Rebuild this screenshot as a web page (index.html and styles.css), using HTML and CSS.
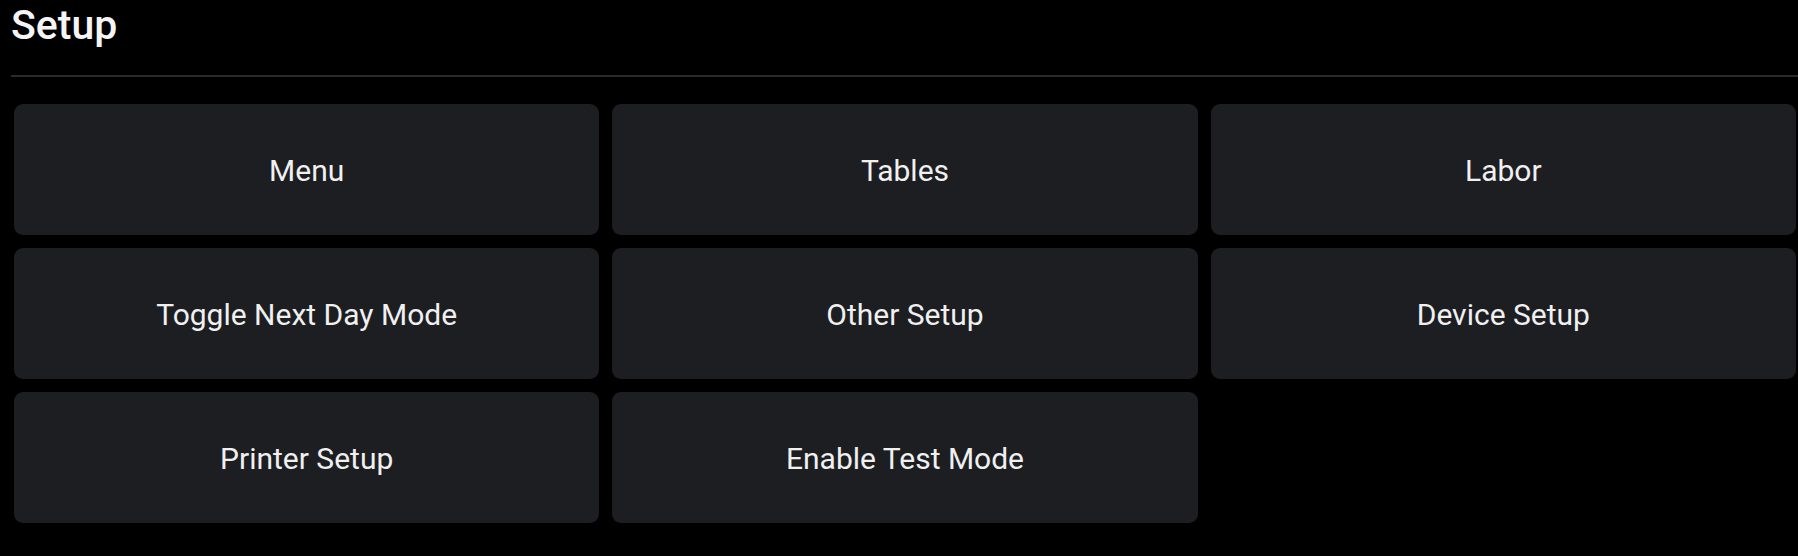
FILE: index.html
```html
<!DOCTYPE html>
<html lang="en">
<head>
    <meta charset="UTF-8">
    <meta name="viewport" content="width=device-width, initial-scale=1.0">
    <title>Setup</title>
    <link rel="stylesheet" href="styles.css">
</head>
<body>
    <div class="page">
        <h1 class="page-title">Setup</h1>
        <hr class="divider">

        <div class="setup-grid">
            <button class="setup-button">Menu</button>
            <button class="setup-button">Tables</button>
            <button class="setup-button">Labor</button>
            <button class="setup-button">Toggle Next Day Mode</button>
            <button class="setup-button">Other Setup</button>
            <button class="setup-button">Device Setup</button>
            <button class="setup-button">Printer Setup</button>
            <button class="setup-button">Enable Test Mode</button>
        </div>
    </div>
</body>
</html>
```

FILE: styles.css
```css
html,
body {
    margin: 0;
    background: #000;
    min-height: 100vh;
}

body {
    font-family: Roboto, "Liberation Sans", Arial, sans-serif;
    color: #f2f2f2;
}

.page {
    padding-left: 11px;
}

.page-title {
    margin: 0;
    padding-top: 2px;
    font-size: 41px;
    line-height: 46px;
    font-weight: 500;
    color: #f5f5f5;
}

.divider {
    margin: 27px 0 0;
    border: none;
    height: 2px;
    background: #2a2a2a;
}

.setup-grid {
    display: grid;
    grid-template-columns: repeat(3, 1fr);
    grid-auto-rows: 131px;
    gap: 13px;
    margin: 27px 2px 0 3px;
}

.setup-button {
    background: #1c1e22;
    color: #f0f0f0;
    border: none;
    border-radius: 9px;
    font-family: inherit;
    font-size: 30px;
    cursor: pointer;
    padding: 2px 0 0;
}

.setup-button:hover {
    background: #24272c;
}
```
